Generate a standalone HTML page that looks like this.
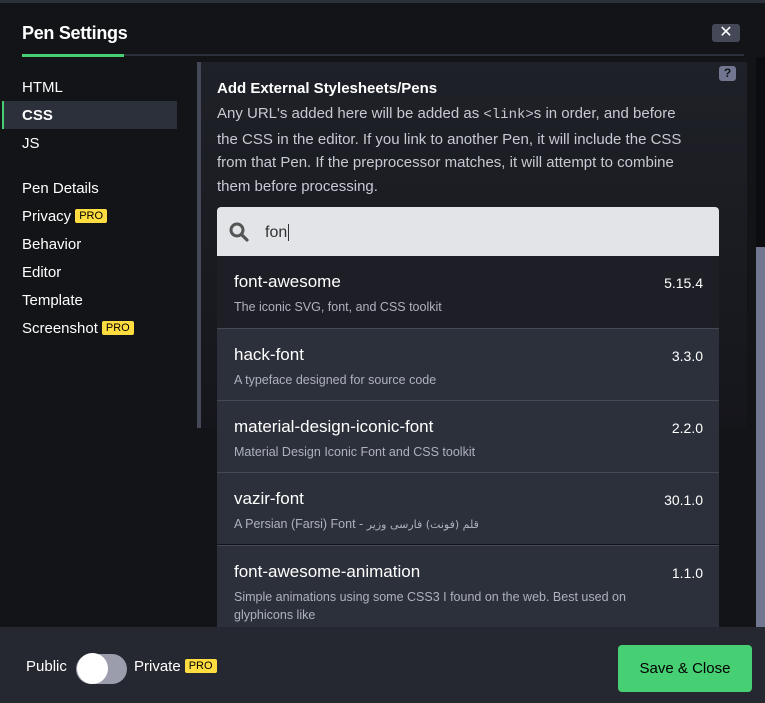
<!DOCTYPE html>
<html><head><meta charset="utf-8"><style>
*{box-sizing:border-box;margin:0;padding:0}
body{width:765px;height:703px;background:#131417;font-family:"Liberation Sans",sans-serif;color:#fff;position:relative;overflow:hidden}
.top{position:absolute;left:0;top:0;width:765px;height:3px;background:#2c303a}
.title{position:absolute;left:22px;top:23px;font-size:18px;font-weight:bold;letter-spacing:-0.3px}
.line{position:absolute;left:22px;top:54px;width:722px;height:2px;background:#2c303a}
.gl{position:absolute;left:22px;top:54px;width:102px;height:3px;background:#47cf73}
.x{position:absolute;left:712px;top:24px;width:28px;height:18px;background:#444857;border-radius:3px;font-size:16px;text-align:center;line-height:18px}
.nav div{position:absolute;left:22px;font-size:15px}
.act{position:absolute;left:2px;top:101px;width:175px;height:28px;background:#2c303a;border-left:2px solid #47cf73}
.pro{display:inline-block;background:#ffdd40;color:#000;font-size:11px;padding:1px 4px;border-radius:2px;vertical-align:2px;margin-left:4px}
.panel{position:absolute;left:197px;top:62px;width:550px;height:366px;background:linear-gradient(#1f2128,#15161b);border-left:4px solid #444857}
.h{position:absolute;left:217px;top:80px;font-size:15px;font-weight:bold}
.p{position:absolute;left:217px;top:102px;width:483px;font-size:15px;line-height:23.5px;color:#c7c9d3}
.q{position:absolute;left:719px;top:66px;width:17px;height:15px;background:#717790;border-radius:3px;color:#131417;font-size:12px;font-weight:bold;text-align:center;line-height:15px}
.sb{position:absolute;left:756px;top:57px;width:9px;height:570px;background:#0c0d10}
.th{position:absolute;left:756px;top:247px;width:9px;height:380px;background:#717790}
.search{position:absolute;left:217px;top:207px;width:502px;height:49px;background:#e3e4e8;border-radius:4px 4px 0 0;color:#333;font-size:16px}
.item{position:absolute;left:217px;width:502px;height:72px;background:#2c303a;border-top:1px solid #444857}
.item b{position:absolute;left:17px;top:16px;font-size:17px;font-weight:normal}
.item i{position:absolute;right:16px;top:19px;font-style:normal;font-size:14px}
.item s{position:absolute;left:17px;top:42px;text-decoration:none;font-size:12.5px;color:#aeb1be;line-height:18px;width:440px}
.foot{position:absolute;left:0;top:627px;width:765px;height:76px;background:#252830}
.btn{position:absolute;left:618px;top:645px;width:134px;height:47px;background:#47cf73;border-radius:4px;color:#000;font-size:15px;text-align:center;line-height:47px}
</style></head><body>
<div class="top"></div>
<div class="title">Pen Settings</div>
<div class="line"></div><div class="gl"></div>
<div class="x">✕</div>
<div class="act"></div>
<div class="nav">
<div style="top:79px">HTML</div>
<div style="top:107px;font-weight:bold">CSS</div>
<div style="top:135px">JS</div>
<div style="top:180px">Pen Details</div>
<div style="top:208px">Privacy<span class="pro">PRO</span></div>
<div style="top:236px">Behavior</div>
<div style="top:264px">Editor</div>
<div style="top:292px">Template</div>
<div style="top:320px">Screenshot<span class="pro">PRO</span></div>
</div>
<div class="panel"></div>
<div class="h">Add External Stylesheets/Pens</div>
<div class="p">Any URL's added here will be added as <span style="font-family:'Liberation Mono',monospace;font-size:14px">&lt;link&gt;</span>s in order, and before the CSS in the editor. If you link to another Pen, it will include the CSS from that Pen. If the preprocessor matches, it will attempt to combine them before processing.</div>
<div class="q">?</div>
<div class="sb"></div><div class="th"></div>
<div class="search">
<svg style="position:absolute;left:12px;top:15px" width="20" height="20" viewBox="0 0 20 20"><circle cx="8" cy="8" r="6" fill="none" stroke="#555" stroke-width="3"/><path d="M12.5 12.5L18 18" stroke="#555" stroke-width="3.2" stroke-linecap="round"/></svg>
<span style="position:absolute;left:48px;top:17px">fon<span style="border-left:1px solid #333;margin-left:1px"></span></span>
</div>
<div class="item" style="top:256px;background:#1e1f26;border-top:none"><b>font-awesome</b><i>5.15.4</i><s>The iconic SVG, font, and CSS toolkit</s></div>
<div class="item" style="top:328px"><b>hack-font</b><i>3.3.0</i><s>A typeface designed for source code</s></div>
<div class="item" style="top:400px"><b>material-design-iconic-font</b><i>2.2.0</i><s>Material Design Iconic Font and CSS toolkit</s></div>
<div class="item" style="top:472px"><b>vazir-font</b><i>30.1.0</i><s>A Persian (Farsi) Font - <span style="font-family:'DejaVu Sans',sans-serif;font-size:11px">قلم (فونت) فارسی وزیر</span></s></div>
<div class="item" style="top:545px;height:82px"><b>font-awesome-animation</b><i>1.1.0</i><s>Simple animations using some CSS3 I found on the web. Best used on glyphicons like</s></div>
<div class="foot"></div>
<div style="position:absolute;left:26px;top:658px;font-size:15px">Public</div>
<div style="position:absolute;left:76px;top:654px;width:51px;height:30px;background:#9b9dad;border-radius:15px"></div>
<div style="position:absolute;left:77px;top:653px;width:31px;height:31px;background:#fff;border-radius:50%"></div>
<div style="position:absolute;left:134px;top:658px;font-size:15px">Private<span class="pro">PRO</span></div>
<div class="btn">Save &amp; Close</div>
</body></html>
